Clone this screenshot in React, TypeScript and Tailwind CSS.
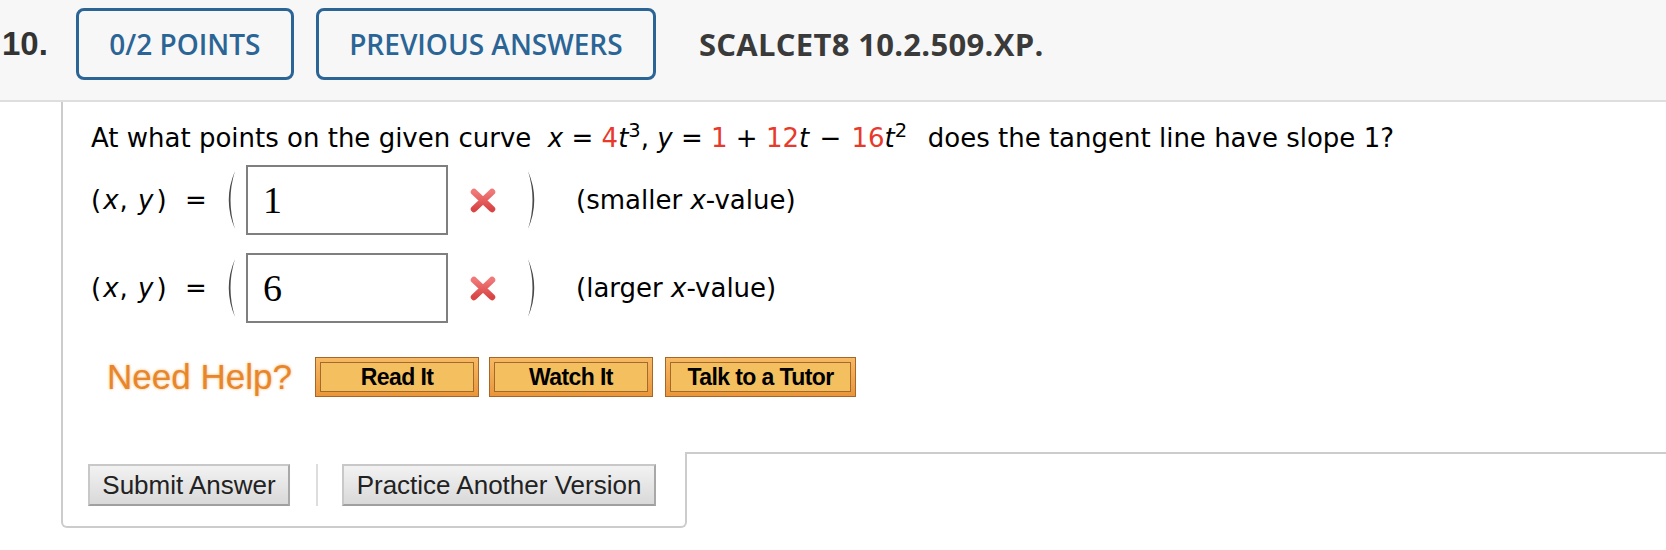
const sans = { fontFamily: '"DejaVu Sans", Verdana, sans-serif' };

function Paren({ right = false }: { right?: boolean }) {
  return (
    <svg width="14" height="60" viewBox="0 0 14 60" className="shrink-0">
      <path
        d={right ? 'M2 1 Q14.5 30 2 59 Q11 30 2 1 Z' : 'M12 1 Q-0.5 30 12 59 Q3 30 12 1 Z'}
        fill="#4a4a4a"
      />
    </svg>
  );
}

function WrongMark() {
  return (
    <svg width="28" height="25" viewBox="0 0 28 25" className="shrink-0">
      <defs>
        <linearGradient id="xg" x1="0" y1="0" x2="0" y2="1">
          <stop offset="0" stopColor="#f07878" />
          <stop offset="1" stopColor="#d94545" />
        </linearGradient>
      </defs>
      <path d="M5 4 L23 21 M23 4 L5 21" stroke="url(#xg)" strokeWidth="6.5" strokeLinecap="round" />
    </svg>
  );
}

function AnswerRow({ value, hint }: { value: string; hint: string }) {
  return (
    <div className="flex h-[70px] items-center text-[26px] text-black" style={sans}>
      <span className="w-[94px] shrink-0">
        (<i className="ml-[2px] mr-[1px]">x</i>,{' '}
        <i className="ml-[2px] mr-[3px]">y</i>)
      </span>
      <span className="w-[22px] shrink-0">=</span>
      <span className="ml-[16px]">
        <Paren />
      </span>
      <div
        className="ml-[9px] flex h-[70px] w-[202px] shrink-0 items-center border-2 border-[#7f7f7f] bg-white pl-[15px] text-[38px] text-black"
        style={{ fontFamily: '"Liberation Serif", "Times New Roman", serif' }}
      >
        {value}
      </div>
      <span className="ml-[21px]">
        <WrongMark />
      </span>
      <span className="ml-[29px]">
        <Paren right />
      </span>
      <span className="ml-[36px]">
        ({hint} <i>x</i>-value)
      </span>
    </div>
  );
}

function HelpButton({ label, width }: { label: string; width: string }) {
  return (
    <div
      className={`flex h-[40px] ${width} shrink-0 border border-[#a66628] bg-gradient-to-b from-[#f7b964] to-[#ea963a] p-[4px]`}
    >
      <div
        className="flex flex-1 items-center justify-center border border-[#a36a2c] bg-[#f4bf5e] text-[23px] font-bold tracking-[-0.6px] text-black"
        style={{ fontFamily: '"Liberation Sans", Arial, sans-serif' }}
      >
        {label}
      </div>
    </div>
  );
}

function GreyButton({ label, width }: { label: string; width: string }) {
  return (
    <div
      className={`flex h-[42px] ${width} items-center justify-center border-2 border-t-[#c8c8c8] border-l-[#c8c8c8] border-r-[#a8a8a8] border-b-[#a0a0a0] bg-gradient-to-b from-[#f2f2f2] to-[#d9d9d9] text-[26px] text-[#222]`}
      style={{ fontFamily: '"Liberation Sans", Arial, sans-serif' }}
    >
      {label}
    </div>
  );
}

const red = 'text-[#e8392b]';

export default function App() {
  return (
    <div className="h-[550px] w-full overflow-hidden bg-white">
      <header className="flex h-[102px] items-center border-b-2 border-[#dedede] bg-[#f7f7f7] pb-[12px]">
        <span
          className="ml-[2px] text-[33px] font-bold text-[#333]"
          style={{ fontFamily: '"Liberation Sans", Arial, sans-serif' }}
        >
          10.
        </span>
        <div
          className="ml-[28px] flex h-[72px] w-[218px] items-center justify-center rounded-[8px] border-[3px] border-[#2b6596] text-[28px] font-semibold text-[#2b6596]"
          style={{ fontFamily: '"Open Sans", sans-serif' }}
        >
          0/2 POINTS
        </div>
        <div
          className="ml-[22px] flex h-[72px] w-[340px] items-center justify-center rounded-[8px] border-[3px] border-[#2b6596] text-[28px] font-semibold text-[#2b6596]"
          style={{ fontFamily: '"Open Sans", sans-serif' }}
        >
          PREVIOUS ANSWERS
        </div>
        <span
          className="ml-[43px] text-[31px] font-bold tracking-[0.3px] text-[#3a3a3a]"
          style={{ fontFamily: '"Open Sans", sans-serif' }}
        >
          SCALCET8 10.2.509.XP.
        </span>
      </header>

      <div className="ml-[61px]">
        <div className="h-[350px] border-l-2 border-[#cccccc] pl-[28px] pt-[21px]">
          <p className="text-[26px] leading-[30px] text-black" style={sans}>
            At what points on the given curve&nbsp; <i>x</i> = <span className={red}>4</span>
            <i>t</i>
            <sup>3</sup>, <i>y</i> = <span className={red}>1</span> + <span className={red}>12</span>
            <i>t</i> <span className="mx-[2px]">−</span> <span className={red}>16</span>
            <i>t</i>
            <sup>2</sup>
            <span className="ml-[4px]">&nbsp; </span>does the tangent line have slope 1?
          </p>
          <div className="mt-[12px] flex flex-col gap-[18px]">
            <AnswerRow value="1" hint="smaller" />
            <AnswerRow value="6" hint="larger" />
          </div>
          <div className="mt-[28px] flex items-center">
            <span
              className="ml-[16px] w-[208px] shrink-0 text-[35px] text-[#e8862c] [text-shadow:0_0_3px_#f5b26a]"
              style={{ fontFamily: '"Liberation Sans", Arial, sans-serif' }}
            >
              Need Help?
            </span>
            <HelpButton label="Read It" width="w-[164px]" />
            <div className="ml-[10px]">
              <HelpButton label="Watch It" width="w-[164px]" />
            </div>
            <div className="ml-[12px]">
              <HelpButton label="Talk to a Tutor" width="w-[191px]" />
            </div>
          </div>
        </div>

        <div className="flex">
          <div className="flex w-[626px] shrink-0 items-center rounded-b-[6px] border-2 border-t-0 border-[#cccccc] pb-[20px] pl-[25px] pt-[12px]">
            <GreyButton label="Submit Answer" width="w-[202px]" />
            <div className="ml-[26px] h-[42px] w-[2px] bg-[#dddddd]" />
            <div className="ml-[24px]">
              <GreyButton label="Practice Another Version" width="w-[314px]" />
            </div>
          </div>
          <div className="flex-1 border-t-2 border-[#cccccc]" />
        </div>
      </div>
    </div>
  );
}
